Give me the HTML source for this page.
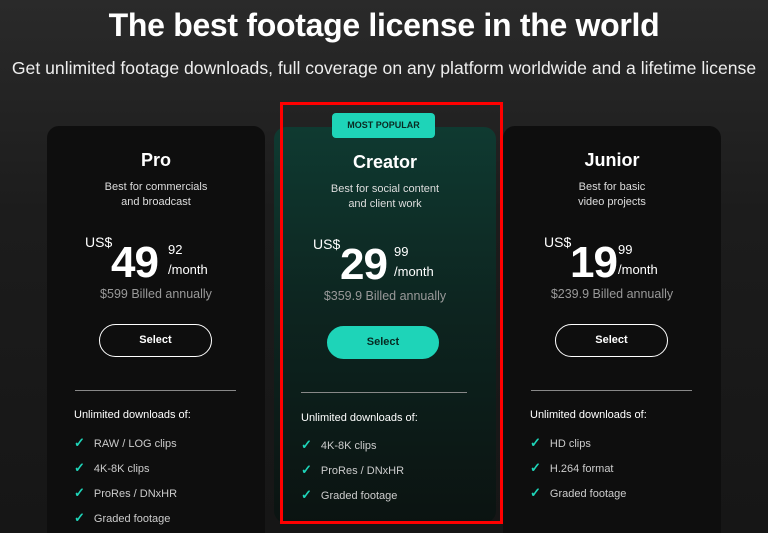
<html style="height:533px;overflow:hidden"><head><style>
body{margin:0;width:768px;height:533px;overflow:hidden;background:linear-gradient(#2a2a2a,#1c1c1c 40%,#161616);font-family:"Liberation Sans",sans-serif;color:#fff;position:relative}
h1{position:absolute;top:7px;left:0;width:768px;text-align:center;margin:0;font-size:32px;font-weight:bold;letter-spacing:-0.3px}
.sub{position:absolute;top:58px;left:0;width:768px;text-align:center;font-size:17.6px;color:#eee;letter-spacing:0px}
.card{position:absolute;top:126px;width:218px;height:407px;background:#0e0e0e;border-radius:12px 12px 0 0}
.c{position:absolute;left:0;width:100%;text-align:center}
.name{top:24px;font-size:18px;font-weight:bold}
.desc{top:54px;font-size:11px;line-height:15px;color:#ddd}
.cur{position:absolute;font-size:14px}
.big{position:absolute;font-size:44px;font-weight:bold;letter-spacing:-1px}
.cents{position:absolute;font-size:13px}
.mo{position:absolute;font-size:13px}
.bill{top:161px;font-size:12.5px;color:#999}
.btn{position:absolute;left:52px;top:198px;width:113px;height:33px;border:1.5px solid #fff;border-radius:17px;text-align:center;line-height:31px;font-size:11px;font-weight:bold;box-sizing:border-box}
.hr{position:absolute;left:28px;width:161px;top:264px;border-top:1px solid #888}
.ul{position:absolute;left:27px;top:283px;font-size:11px}
.li{position:absolute;left:27px;font-size:11px;color:#ccc}
.li b{color:#1ed4b8;font-weight:bold;margin-right:9px;font-size:13px}
</style></head><body>
<h1>The best footage license in the world</h1>
<div class="sub">Get unlimited footage downloads, full coverage on any platform worldwide and a lifetime license</div>

<div class="card" style="left:47px">
<div class="c name">Pro</div>
<div class="c desc">Best for commercials<br>and broadcast</div>
<div class="cur" style="left:38px;top:108px">US$</div>
<div class="big" style="left:64px;top:112px">49</div>
<div class="cents" style="left:121px;top:116px">92</div>
<div class="mo" style="left:121px;top:136px">/month</div>
<div class="c bill">$599 Billed annually</div>
<div class="btn">Select</div>
<div class="hr"></div>
<div class="ul">Unlimited downloads of:</div>
<div class="li" style="top:309px"><b>✓</b>RAW / LOG clips</div>
<div class="li" style="top:334px"><b>✓</b>4K-8K clips</div>
<div class="li" style="top:359px"><b>✓</b>ProRes / DNxHR</div>
<div class="li" style="top:384px"><b>✓</b>Graded footage</div>
</div>

<div class="card" style="left:503px">
<div class="c name">Junior</div>
<div class="c desc">Best for basic<br>video projects</div>
<div class="cur" style="left:41px;top:108px">US$</div>
<div class="big" style="left:67px;top:112px">19</div>
<div class="cents" style="left:115px;top:116px">99</div>
<div class="mo" style="left:115px;top:136px">/month</div>
<div class="c bill">$239.9 Billed annually</div>
<div class="btn">Select</div>
<div class="hr"></div>
<div class="ul">Unlimited downloads of:</div>
<div class="li" style="top:309px"><b>✓</b>HD clips</div>
<div class="li" style="top:334px"><b>✓</b>H.264 format</div>
<div class="li" style="top:359px"><b>✓</b>Graded footage</div>
</div>

<div class="card" style="left:274px;top:127px;width:222px;height:396px;background:linear-gradient(#0f3a31,#0d2520 45%,#0b1311);border-radius:12px">
<div class="c name" style="top:25px">Creator</div>
<div class="c desc" style="top:55px">Best for social content<br>and client work</div>
<div class="cur" style="left:39px;top:109px">US$</div>
<div class="big" style="left:66px;top:113px">29</div>
<div class="cents" style="left:120px;top:117px">99</div>
<div class="mo" style="left:120px;top:137px">/month</div>
<div class="c bill" style="top:162px">$359.9 Billed annually</div>
<div class="btn" style="left:53px;top:199px;width:112px;background:#1ed4b8;border-color:#1ed4b8;color:#062a22">Select</div>
<div class="hr" style="left:27px;width:166px;top:265px"></div>
<div class="ul" style="top:285px">Unlimited downloads of:</div>
<div class="li" style="top:310px"><b>✓</b>4K-8K clips</div>
<div class="li" style="top:335px"><b>✓</b>ProRes / DNxHR</div>
<div class="li" style="top:360px"><b>✓</b>Graded footage</div>
</div>
<div style="position:absolute;left:332px;top:113px;width:103px;height:25px;background:#1ed4b8;border-radius:4px;color:#0a2a22;font-size:9px;font-weight:bold;text-align:center;line-height:25px">MOST POPULAR</div>
<div style="position:absolute;left:280px;top:102px;width:223px;height:422px;border:3px solid #f00;box-sizing:border-box"></div>
</body></html>
